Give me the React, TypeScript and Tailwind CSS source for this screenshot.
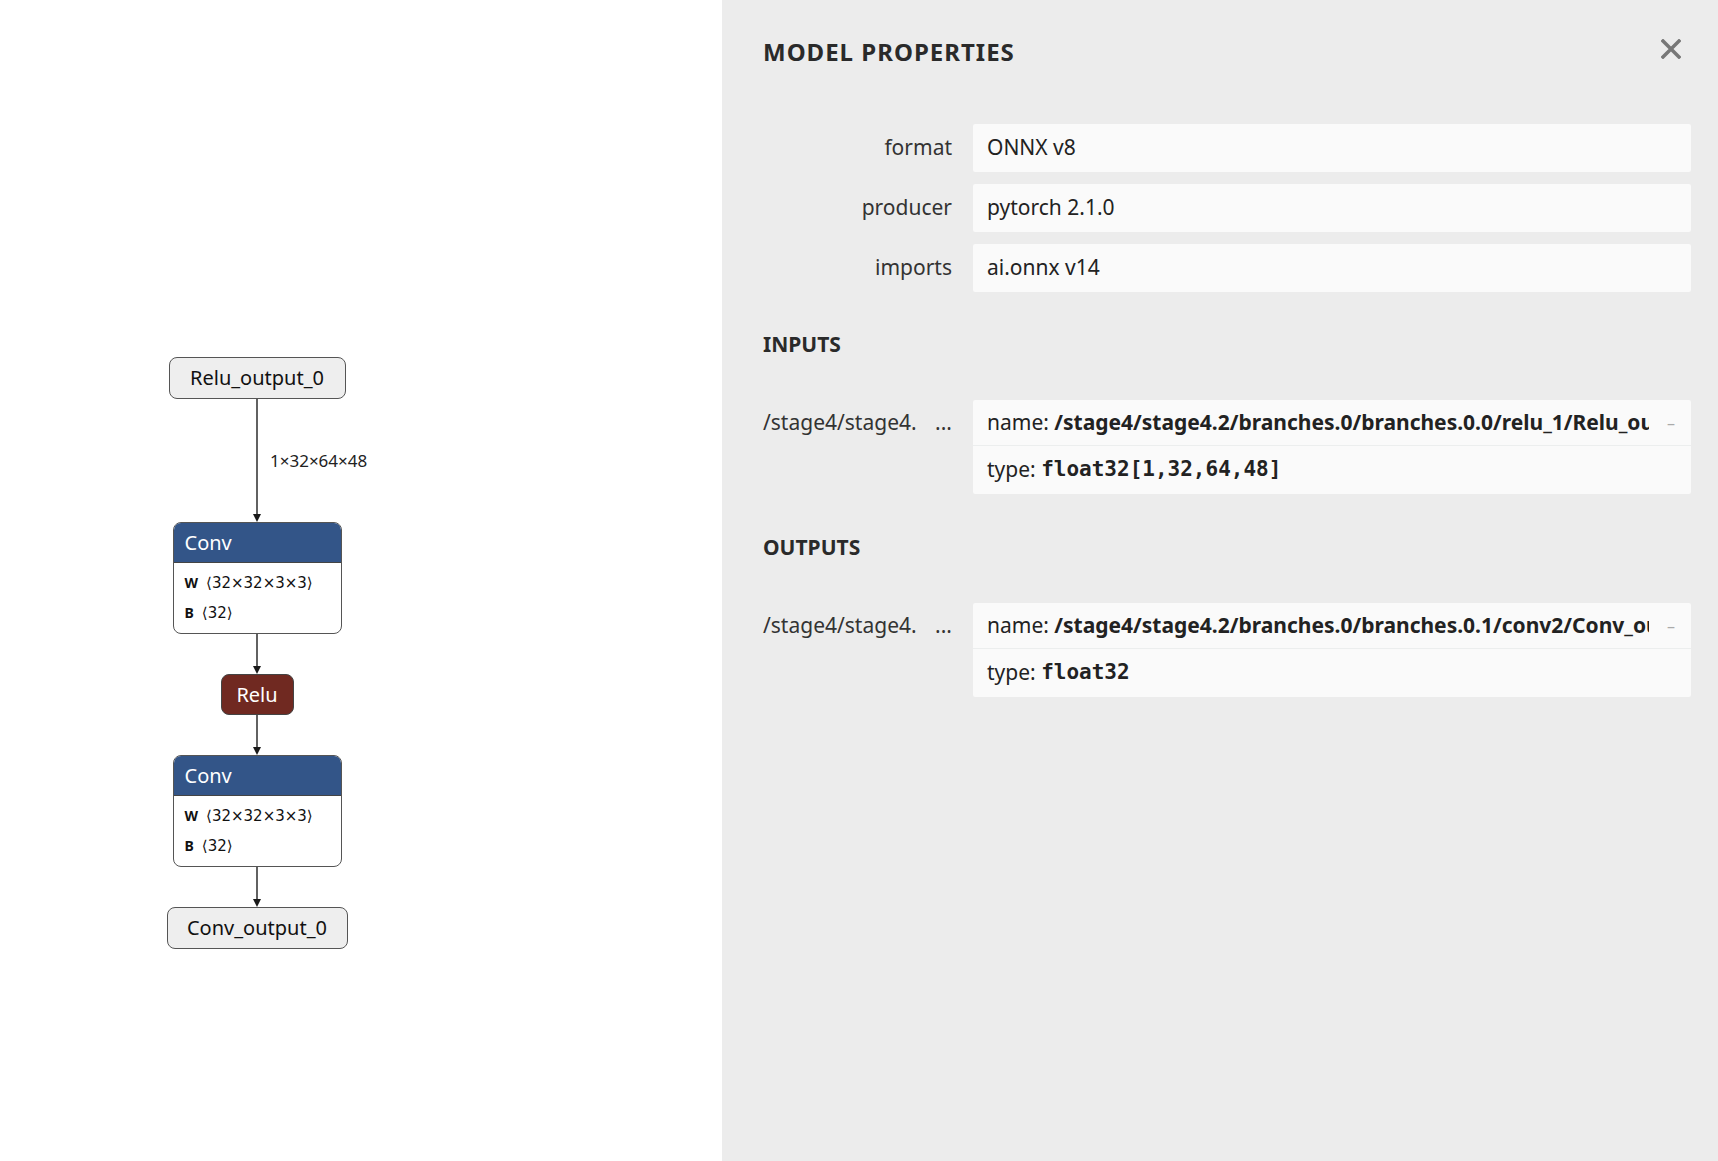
import React from "react";

const sans = "font-['Noto_Sans',sans-serif]";

function Edge({ h, label }: { h: number; label?: string }) {
  return (
    <div className="relative flex justify-center" style={{ height: h }}>
      <svg width="12" height={h} className="block">
        <line x1="6" y1="0" x2="6" y2={h - 6} stroke="#3a3a3a" strokeWidth="1.6" />
        <polygon points={`2,${h - 8} 10,${h - 8} 6,${h}`} fill="#1a1a1a" />
      </svg>
      {label && (
        <span className="absolute left-[19px] top-1/2 -translate-y-1/2 whitespace-nowrap text-[17px] text-[#222]">
          {label}
        </span>
      )}
    </div>
  );
}

function Tensor({ name, w }: { name: string; w: string }) {
  return (
    <div
      className={`${w} h-[42px] flex items-center justify-center rounded-[8px] border-[1.5px] border-[#555] bg-[#eeeeee] text-[20px] text-[#111]`}
    >
      {name}
    </div>
  );
}

function ConvNode() {
  return (
    <div className="w-[169px] h-[112px] rounded-[8px] border-[1.5px] border-[#555] bg-white overflow-hidden flex flex-col">
      <div className="h-[40px] shrink-0 bg-[#335588] border-b-[1.5px] border-[#444] flex items-center px-[11px] text-[20px] text-white">
        Conv
      </div>
      <div className="flex flex-col py-[5px] px-[11px] text-[#111]">
        <div className="flex items-center gap-[8px] leading-[30px]">
          <span className="text-[14px] font-bold">W</span>
          <span className="text-[15px] font-['DejaVu_Sans',sans-serif]">⟨32×32×3×3⟩</span>
        </div>
        <div className="flex items-center gap-[8px] leading-[30px]">
          <span className="text-[14px] font-bold">B</span>
          <span className="text-[15px] font-['DejaVu_Sans',sans-serif]">⟨32⟩</span>
        </div>
      </div>
    </div>
  );
}

function Graph() {
  return (
    <div className="ml-[157px] pt-[357px] w-[200px] flex flex-col items-center">
      <Tensor name="Relu_output_0" w="w-[177px]" />
      <Edge h={123} label="1×32×64×48" />
      <ConvNode />
      <Edge h={40} />
      <div className="w-[73px] h-[41px] rounded-[8px] border-[1.5px] border-[#444] bg-[#702921] flex items-center justify-center text-[20px] text-white">
        Relu
      </div>
      <Edge h={40} />
      <ConvNode />
      <Edge h={40} />
      <Tensor name="Conv_output_0" w="w-[181px]" />
    </div>
  );
}

const props = [
  { k: "format", v: "ONNX v8" },
  { k: "producer", v: "pytorch 2.1.0" },
  { k: "imports", v: "ai.onnx v14" },
];

function Argument({ name, type }: { name: string; type: string }) {
  return (
    <div className="grid grid-cols-[189px_minmax(0,1fr)] gap-x-[21px]">
      <div className="flex justify-between h-[46px] items-center text-[21px] text-[#333] whitespace-nowrap">
        <span>/stage4/stage4.</span>
        <span>...</span>
      </div>
      <div className="min-w-0 bg-[#fafafa] rounded-[2px] flex flex-col">
        <div className="h-[46px] flex items-center pl-[14px] pr-[16px] border-b border-[#eceeee] text-[21px] text-[#222]">
          <div className="flex-1 min-w-0 overflow-hidden whitespace-nowrap">
            name: <span className="font-bold">{name}</span>
          </div>
          <span className="ml-[18px] text-[#aaa] text-[16px]">–</span>
        </div>
        <div className="h-[48px] flex items-center pl-[14px] text-[21px] text-[#222] whitespace-nowrap">
          type:&nbsp;
          <span className="font-['DejaVu_Sans_Mono',monospace] font-bold text-[21px]">{type}</span>
        </div>
      </div>
    </div>
  );
}

function Sidebar() {
  return (
    <div className="flex-1 min-w-0 bg-[#ececec] pl-[41px] pr-[27px] pt-[36px]">
      <div className="flex items-center justify-between">
        <h1 className="text-[24px] leading-[32px] font-bold tracking-[1px] text-[#2a2a2a]">MODEL PROPERTIES</h1>
        <button className="mr-[10px] -mt-[6px] shrink-0" aria-label="close">
          <svg width="20" height="20" viewBox="0 0 20 20" className="block">
            <path d="M2 2 L18 18 M18 2 L2 18" stroke="#777" strokeWidth="3.5" strokeLinecap="square" />
          </svg>
        </button>
      </div>

      <div className="mt-[56px] flex flex-col gap-[12px]">
        {props.map((p) => (
          <div key={p.k} className="grid grid-cols-[189px_minmax(0,1fr)] gap-x-[21px]">
            <div className="h-[48px] flex items-center justify-end text-[21px] text-[#333]">{p.k}</div>
            <div className="h-[48px] flex items-center bg-[#fafafa] rounded-[2px] pl-[14px] text-[21px] text-[#222]">
              {p.v}
            </div>
          </div>
        ))}
      </div>

      <h2 className="mt-[38px] text-[21px] leading-[28px] font-bold text-[#2a2a2a]">INPUTS</h2>
      <div className="mt-[42px]">
        <Argument name="/stage4/stage4.2/branches.0/branches.0.0/relu_1/Relu_output_0" type="float32[1,32,64,48]" />
      </div>

      <h2 className="mt-[39px] text-[21px] leading-[28px] font-bold text-[#2a2a2a]">OUTPUTS</h2>
      <div className="mt-[42px]">
        <Argument name="/stage4/stage4.2/branches.0/branches.0.1/conv2/Conv_output_0" type="float32" />
      </div>
    </div>
  );
}

export default function App() {
  return (
    <div className={`flex w-full h-screen overflow-hidden ${sans}`}>
      <div className="w-[722px] shrink-0 bg-white">
        <Graph />
      </div>
      <Sidebar />
    </div>
  );
}
